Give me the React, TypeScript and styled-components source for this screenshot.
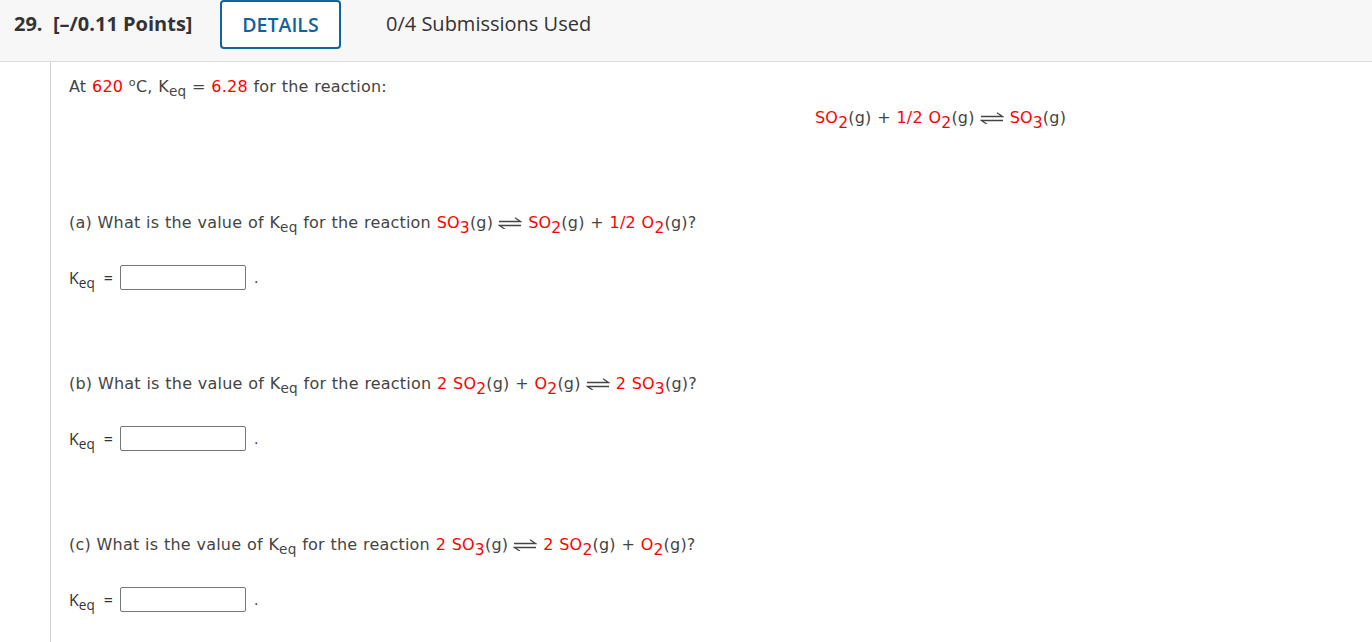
import styled, { createGlobalStyle } from "styled-components";

const GlobalStyle = createGlobalStyle`
  body {
    margin: 0;
    background: #fff;
    font-family: "Open Sans", "Liberation Sans", sans-serif;
  }
`;

type Piece = { t: string; r?: boolean; sub?: boolean; arrow?: boolean };

const questions: { label: string; reaction: Piece[] }[] = [
  {
    label: "(a)",
    reaction: [
      { t: "SO", r: true },
      { t: "3", r: true, sub: true },
      { t: "(g)" },
      { t: "", arrow: true },
      { t: "SO", r: true },
      { t: "2", r: true, sub: true },
      { t: "(g) + " },
      { t: "1/2 O", r: true },
      { t: "2", r: true, sub: true },
      { t: "(g)?" },
    ],
  },
  {
    label: "(b)",
    reaction: [
      { t: "2 SO", r: true },
      { t: "2", r: true, sub: true },
      { t: "(g) + " },
      { t: "O", r: true },
      { t: "2", r: true, sub: true },
      { t: "(g)" },
      { t: "", arrow: true },
      { t: "2 SO", r: true },
      { t: "3", r: true, sub: true },
      { t: "(g)?" },
    ],
  },
  {
    label: "(c)",
    reaction: [
      { t: "2 SO", r: true },
      { t: "3", r: true, sub: true },
      { t: "(g)" },
      { t: "", arrow: true },
      { t: "2 SO", r: true },
      { t: "2", r: true, sub: true },
      { t: "(g) + " },
      { t: "O", r: true },
      { t: "2", r: true, sub: true },
      { t: "(g)?" },
    ],
  },
];

const mainReaction: Piece[] = [
  { t: "SO", r: true },
  { t: "2", r: true, sub: true },
  { t: "(g) + " },
  { t: "1/2 O", r: true },
  { t: "2", r: true, sub: true },
  { t: "(g)" },
  { t: "", arrow: true },
  { t: "SO", r: true },
  { t: "3", r: true, sub: true },
  { t: "(g)" },
];

// equilibrium harpoons, drawn since the font glyph is too small
const EqArrow = () => (
  <ArrowSvg width="24" height="12" viewBox="0 0 24 12" aria-label="⇌">
    <path d="M1 4.5H22.5L17 0.8" fill="none" stroke="#444" strokeWidth="1.3" />
    <path d="M23 8.5H1.5L7 12.2" fill="none" stroke="#444" strokeWidth="1.3" />
  </ArrowSvg>
);

const Formula = ({ parts }: { parts: Piece[] }) => (
  <>
    {parts.map((p, i) =>
      p.arrow ? (
        <EqArrow key={i} />
      ) : p.sub ? (
        <Index key={i} $red={p.r}>
          {p.t}
        </Index>
      ) : (
        <Part key={i} $red={p.r}>
          {p.t}
        </Part>
      )
    )}
  </>
);

export default function App() {
  return (
    <>
      <GlobalStyle />
      <Header>
        <Title>29.&nbsp; [–/0.11 Points]</Title>
        <DetailsButton>DETAILS</DetailsButton>
        <Submissions>0/4 Submissions Used</Submissions>
      </Header>
      <Body>
        <Intro>
          At <Part $red>620</Part> <Sup>o</Sup>C, K<Sub>eq</Sub> ={" "}
          <Part $red>6.28</Part> for the reaction:
        </Intro>
        <MainReaction>
          <Formula parts={mainReaction} />
        </MainReaction>
        {questions.map((q) => (
          <Question key={q.label}>
            <Prompt>
              {q.label} What is the value of K<Sub>eq</Sub> for the reaction{" "}
              <Formula parts={q.reaction} />
            </Prompt>
            <AnswerRow>
              <KLabel>
                K<Sub>eq</Sub>
              </KLabel>
              <Equals>=</Equals>
              <AnswerBox type="text" />
              <Dot>.</Dot>
            </AnswerRow>
          </Question>
        ))}
      </Body>
    </>
  );
}

const Header = styled.div`
  height: 61px;
  background: #f7f7f7;
  border-bottom: 1px solid #dcdcdc;
  display: flex;
  align-items: flex-start;
  padding-left: 14px;
`;

const Title = styled.div`
  font-weight: 700;
  font-size: 20px;
  color: #333;
  margin-top: 10px;
  width: 206px;
`;

const DetailsButton = styled.div`
  width: 121px;
  height: 49px;
  box-sizing: border-box;
  border: 2px solid #11629d;
  border-radius: 4px;
  display: flex;
  align-items: center;
  justify-content: center;
  color: #11629d;
  font-weight: 600;
  font-size: 19.5px;
  background: #fff;
`;

const Submissions = styled.div`
  margin-left: 45px;
  margin-top: 10px;
  font-size: 20px;
  color: #333;
`;

const Body = styled.div`
  margin-left: 50px;
  border-left: 1px solid #cfcfcf;
  padding: 14px 0 30px 18px;
  font-family: "DejaVu Sans", "Bitstream Vera Sans", sans-serif;
  font-size: 16px;
  letter-spacing: 0.2px;
  word-spacing: 0.4px;
  color: #444;
`;

const Intro = styled.div`
  line-height: 22px;
`;

const MainReaction = styled.div`
  margin-top: 9px;
  padding-left: 746px;
  line-height: 22px;
`;

const Question = styled.div`
  margin-top: 83px;
  &:first-of-type {
    margin-top: 0;
  }
`;

const Prompt = styled.div`
  line-height: 22px;
`;

const AnswerRow = styled.div`
  display: flex;
  align-items: center;
  margin-top: 31px;
  height: 25px;
  letter-spacing: 0;
  word-spacing: 0;
`;

const KLabel = styled.span`
  font-family: "Open Sans", sans-serif;
  font-size: 16px;
  color: #333;
`;

const Equals = styled.span`
  font-family: "Open Sans", sans-serif;
  font-size: 16px;
  margin: 0 7px 0 9px;
  color: #333;
`;

const AnswerBox = styled.input`
  width: 126px;
  height: 25px;
  box-sizing: border-box;
  border: 1px solid #767676;
  border-radius: 2px;
  padding: 0 4px;
  margin: 0;
`;

const Dot = styled.span`
  margin-left: 8px;
  color: #333;
  font-size: 14px;
`;

const ArrowSvg = styled.svg`
  margin: 0 6px 0 5px;
  vertical-align: -1px;
`;

const Part = styled.span<{ $red?: boolean }>`
  color: ${(p) => (p.$red ? "#f00" : "inherit")};
`;

const Sub = styled.sub<{ $red?: boolean }>`
  color: ${(p) => (p.$red ? "#f00" : "inherit")};
  font-size: 0.85em;
  vertical-align: -0.3em;
  line-height: 0;
`;

const Index = styled.sub<{ $red?: boolean }>`
  color: ${(p) => (p.$red ? "#f00" : "inherit")};
  font-size: 0.97em;
  vertical-align: -0.3em;
  line-height: 0;
`;

const Sup = styled.sup`
  font-size: 0.7em;
  vertical-align: 0.5em;
  line-height: 0;
`;
